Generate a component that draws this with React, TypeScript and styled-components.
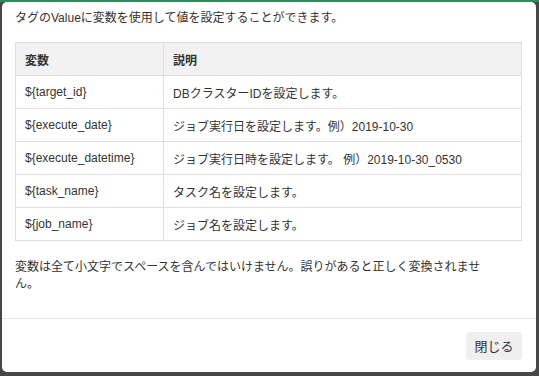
import styled, { createGlobalStyle } from "styled-components";

const GlobalStyle = createGlobalStyle`
    html, body {
        margin: 0;
        padding: 0;
        background: #474747;
    }
    body {
        font-family: 'Liberation Sans', 'Noto Sans CJK JP', sans-serif;
        color: #333;
    }
`;

const variables = [
    { name: "${target_id}", desc: "DBクラスターIDを設定します。" },
    { name: "${execute_date}", desc: "ジョブ実行日を設定します。例）2019-10-30" },
    { name: "${execute_datetime}", desc: "ジョブ実行日時を設定します。 例）2019-10-30_0530" },
    { name: "${task_name}", desc: "タスク名を設定します。" },
    { name: "${job_name}", desc: "ジョブ名を設定します。" },
];

export default function App() {
    return (
        <BackdropStyled>
            <GlobalStyle />
            <ModalStyled>
                <BodyStyled>
                    <LeadStyled>タグのValueに変数を使用して値を設定することができます。</LeadStyled>
                    <TableStyled>
                        <thead>
                            <tr>
                                <HeadCell $width="148px">変数</HeadCell>
                                <HeadCell>説明</HeadCell>
                            </tr>
                        </thead>
                        <tbody>
                            {variables.map((v) => (
                                <tr key={v.name}>
                                    <Cell>{v.name}</Cell>
                                    <Cell>{v.desc}</Cell>
                                </tr>
                            ))}
                        </tbody>
                    </TableStyled>
                    <NoteStyled>
                        変数は全て小文字でスペースを含んではいけません。誤りがあると正しく変換されません。
                    </NoteStyled>
                </BodyStyled>
                <FooterStyled>
                    <CloseButton>閉じる</CloseButton>
                </FooterStyled>
            </ModalStyled>
        </BackdropStyled>
    );
}

const BackdropStyled = styled.div`
    width: 539px;
    height: 376px;
    box-sizing: border-box;
    border-top: 2px solid #2f8a5a;
    overflow: hidden;
`;

const ModalStyled = styled.div`
    width: 534px;
    height: 370px;
    margin-left: 2px;
    background: #fff;
    border-radius: 5px;
    display: flex;
    flex-direction: column;
    box-sizing: border-box;
`;

const BodyStyled = styled.div`
    padding: 8px 14px 0 13px;
    flex: 1;
`;

const LeadStyled = styled.p`
    margin: 0 0 16px 0;
    font-size: 12px;
    line-height: 16px;
`;

const TableStyled = styled.table`
    width: 100%;
    border-collapse: collapse;
    font-size: 12px;
`;

const HeadCell = styled.th<{ $width?: string }>`
    width: ${(p) => p.$width || "auto"};
    text-align: left;
    font-weight: 700;
    background: #f2f2f2;
    border: 1px solid #dedede;
    height: 33px;
    padding: 0 9px;
    box-sizing: border-box;
`;

const Cell = styled.td`
    border: 1px solid #dedede;
    height: 33px;
    padding: 0 9px;
    box-sizing: border-box;
`;

const NoteStyled = styled.p`
    margin: 18px 0 0 0;
    width: 480px;
    font-size: 12px;
    line-height: 17px;
`;

const FooterStyled = styled.div`
    border-top: 1px solid #e6e6e6;
    height: 54px;
    box-sizing: border-box;
    display: flex;
    align-items: center;
    justify-content: flex-end;
    padding: 0 14px;
`;

const CloseButton = styled.button`
    font-family: 'Liberation Sans', 'Noto Sans CJK JP', sans-serif;
    font-size: 13px;
    color: #333;
    background: #efefef;
    border: none;
    border-radius: 4px;
    width: 56px;
    height: 28px;
    padding: 0;
`;
